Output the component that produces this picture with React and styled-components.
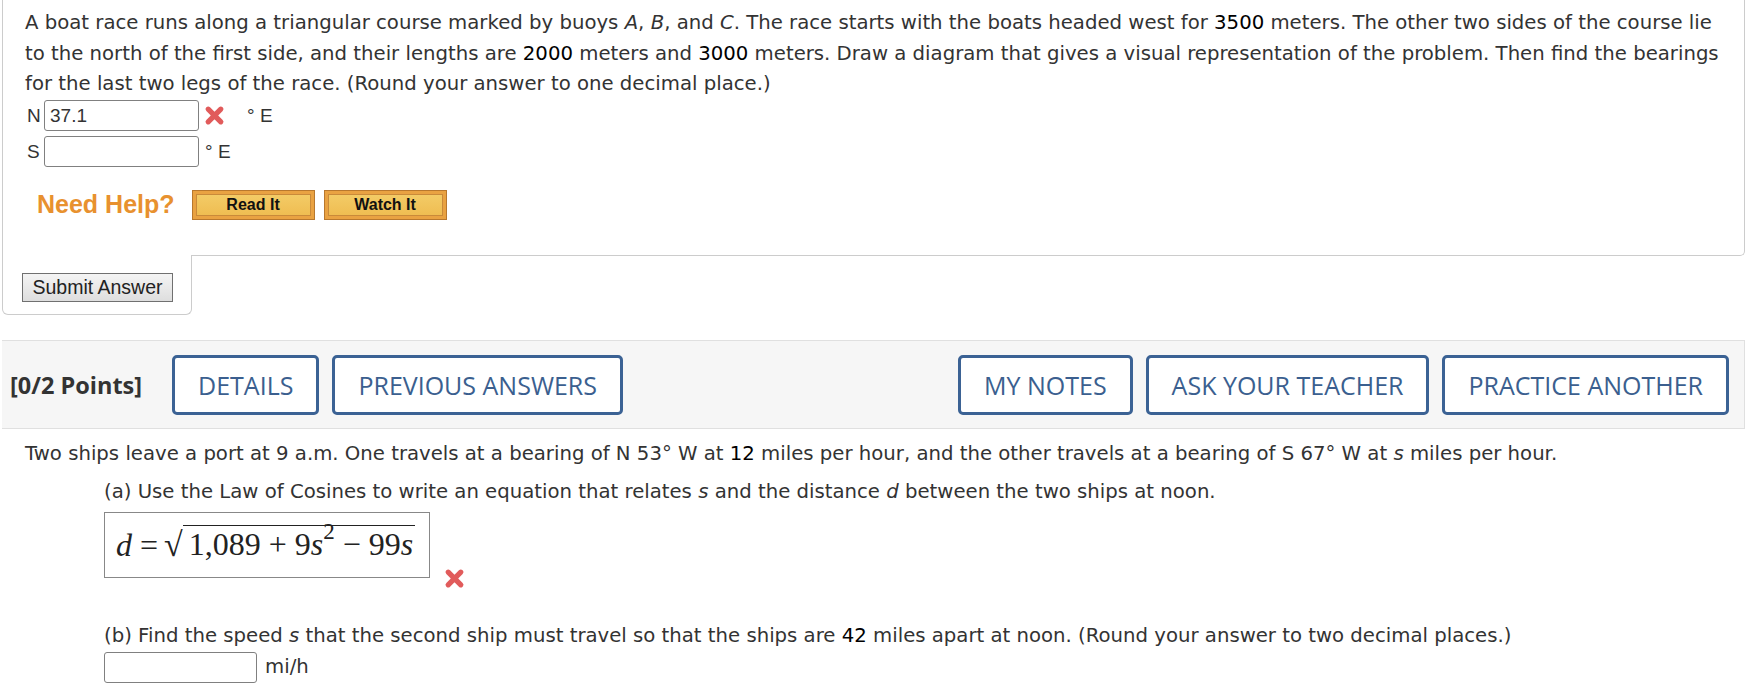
import styled, { createGlobalStyle } from 'styled-components';

const GlobalStyle = createGlobalStyle`
  body {
    margin: 0;
    background: #fff;
    font-family: "DejaVu Sans", Verdana, sans-serif;
    color: #333;
  }
`;

const Page = styled.div`
  width: 1743px;
  margin-left: 2px;
`;

const QuestionPanel = styled.div`
  border: 1px solid #ccc;
  border-top: none;
  border-radius: 0 0 5px 0;
  padding: 8px 12px 0 22px;
  height: 247px;
`;

const Prompt = styled.p`
  margin: 0 0 -2px 0;
  font-size: 19.7px;
  line-height: 30.5px;
  color: #333;
`;

const Num = styled.span`
  color: #000;
`;

const Var = styled.i``;

const AnswerRow = styled.div`
  display: flex;
  align-items: center;
  height: 36px;
  font-family: "Liberation Sans", Arial, sans-serif;
  font-size: 19px;
  color: #333;
`;

const Letter = styled.span`
  width: 17px;
  margin-left: 2px;
`;

const TextInput = styled.input`
  box-sizing: border-box;
  width: ${(p) => p.$w || 155}px;
  height: 31px;
  border: 1px solid #808080;
  border-radius: 3px;
  padding: 0 5px;
  font-family: "Liberation Sans", Arial, sans-serif;
  font-size: 19px;
  color: #333;
  background: #fff;
`;

const Unit = styled.span`
  margin-left: ${(p) => p.$gap || 6}px;
`;

const WrongMark = styled.svg`
  width: 21px;
  height: 21px;
  margin-left: ${(p) => p.$gap || 6}px;
  margin-bottom: ${(p) => p.$drop || 0}px;
  flex-shrink: 0;
`;

function Cross({ gap, drop }) {
  return (
    <WrongMark $gap={gap} $drop={drop} viewBox="0 0 20 20">
      <path d="M4 4 L16 16 M16 4 L4 16" stroke="#e15b5b" strokeWidth="5" strokeLinecap="round" />
    </WrongMark>
  );
}

const HelpRow = styled.div`
  display: flex;
  align-items: center;
  gap: 9px;
  margin-top: 20px;
  padding-left: 12px;
`;

const HelpLabel = styled.span`
  font-family: "Liberation Sans", Arial, sans-serif;
  font-weight: bold;
  font-size: 25px;
  color: #e8912f;
  margin-right: 8px;
`;

const HelpButton = styled.button`
  box-sizing: border-box;
  width: 123px;
  height: 30px;
  padding: 3px;
  border: 1px solid #b8782e;
  background: #e9a242;
  cursor: pointer;
`;

const HelpInner = styled.span`
  display: flex;
  align-items: center;
  justify-content: center;
  height: 100%;
  box-sizing: border-box;
  border: 1px solid #c98a3a;
  background: linear-gradient(#f3cb66, #efbd52);
  font-family: "Liberation Sans", Arial, sans-serif;
  font-weight: bold;
  font-size: 16px;
  color: #111;
`;

const SubmitTab = styled.div`
  width: 190px;
  height: 60px;
  box-sizing: border-box;
  margin-top: -1px;
  border: 1px solid #ccc;
  border-top: none;
  border-radius: 0 0 6px 6px;
  background: #fff;
  padding: 18px 0 0 19px;
`;

const SubmitButton = styled.button`
  width: 151px;
  height: 29px;
  border: 1px solid #707070;
  background: linear-gradient(#f4f4f4, #dedede);
  font-family: "Liberation Sans", Arial, sans-serif;
  font-size: 19.5px;
  color: #222;
  padding: 0;
`;

const ToolBand = styled.div`
  display: flex;
  align-items: center;
  margin-top: 25px;
  height: 89px;
  box-sizing: border-box;
  background: #f6f6f6;
  border: 1px solid #e0e0e0;
  border-left: none;
  padding: 0 15px 0 8px;
`;

const Points = styled.span`
  font-family: "Open Sans", sans-serif;
  font-weight: bold;
  font-size: 23.5px;
  color: #333;
  margin-right: 30px;
`;

const ButtonGroup = styled.div`
  display: flex;
  gap: 13px;
  margin-left: ${(p) => (p.$right ? 'auto' : '0')};
`;

const ToolButton = styled.button`
  box-sizing: border-box;
  height: 60px;
  padding: 0 23px;
  border: 3px solid #3b6294;
  border-radius: 5px;
  background: #fff;
  color: #3b5f8f;
  font-family: "Open Sans", sans-serif;
  font-size: 25px;
`;

const Second = styled.div`
  padding: 10px 0 0 23px;
  font-size: 19.7px;
  line-height: 30.5px;
  color: #333;
`;

const Part = styled.div`
  padding-left: 79px;
  margin-top: ${(p) => p.$top || 0}px;
`;

const MathRow = styled.div`
  display: flex;
  align-items: flex-end;
  margin-top: 5px;
`;

const MathBox = styled.div`
  box-sizing: border-box;
  width: 326px;
  height: 66px;
  border: 1px solid #888;
  display: flex;
  align-items: center;
  padding-left: 11px;
  font-family: "Liberation Serif", "Times New Roman", serif;
  font-size: 32px;
  color: #222;
`;

const MathVar = styled.i`
  font-style: italic;
`;

const Radical = styled.span`
  font-size: 34px;
  margin: 0 0 0 6px;
`;

const Radicand = styled.span`
  border-top: 1.5px solid #222;
  padding: 3px 2px 0 6px;
  margin-top: -5px;
  white-space: nowrap;
`;

const Sup = styled.sup`
  font-size: 23px;
  vertical-align: 16px;
  line-height: 0;
`;

const AnswerLine = styled.div`
  display: flex;
  align-items: center;
  gap: 8px;
`;

export default function App() {
  return (
    <Page>
      <GlobalStyle />
      <QuestionPanel>
        <Prompt>
          A boat race runs along a triangular course marked by buoys <Var>A</Var>, <Var>B</Var>, and{' '}
          <Var>C</Var>. The race starts with the boats headed west for <Num>3500</Num> meters. The other two
          sides of the course lie to the north of the first side, and their lengths are <Num>2000</Num> meters
          and <Num>3000</Num> meters. Draw a diagram that gives a visual representation of the problem. Then
          find the bearings for the last two legs of the race. (Round your answer to one decimal place.)
        </Prompt>
        <AnswerRow>
          <Letter>N</Letter>
          <TextInput defaultValue="37.1" />
          <Cross gap={5} />
          <Unit $gap={22}>° E</Unit>
        </AnswerRow>
        <AnswerRow>
          <Letter>S</Letter>
          <TextInput defaultValue="" />
          <Unit $gap={6}>° E</Unit>
        </AnswerRow>
        <HelpRow>
          <HelpLabel>Need Help?</HelpLabel>
          <HelpButton>
            <HelpInner>Read It</HelpInner>
          </HelpButton>
          <HelpButton>
            <HelpInner>Watch It</HelpInner>
          </HelpButton>
        </HelpRow>
      </QuestionPanel>
      <SubmitTab>
        <SubmitButton>Submit Answer</SubmitButton>
      </SubmitTab>
      <ToolBand>
        <Points>[0/2 Points]</Points>
        <ButtonGroup>
          <ToolButton>DETAILS</ToolButton>
          <ToolButton>PREVIOUS ANSWERS</ToolButton>
        </ButtonGroup>
        <ButtonGroup $right>
          <ToolButton>MY NOTES</ToolButton>
          <ToolButton>ASK YOUR TEACHER</ToolButton>
          <ToolButton>PRACTICE ANOTHER</ToolButton>
        </ButtonGroup>
      </ToolBand>
      <Second>
        <div>
          Two ships leave a port at 9 a.m. One travels at a bearing of N 53° W at <Num>12</Num> miles per hour,
          and the other travels at a bearing of S 67° W at <Var>s</Var> miles per hour.
        </div>
        <Part $top={7}>
          (a) Use the Law of Cosines to write an equation that relates <Var>s</Var> and the distance{' '}
          <Var>d</Var> between the two ships at noon.
          <MathRow>
            <MathBox>
              <MathVar>d</MathVar>&nbsp;=<Radical>√</Radical>
              <Radicand>
                1,089 + 9<MathVar>s</MathVar>
                <Sup>2</Sup> − 99<MathVar>s</MathVar>
              </Radicand>
            </MathBox>
            <Cross gap={14} drop={-11} />
          </MathRow>
        </Part>
        <Part $top={43}>
          (b) Find the speed <Var>s</Var> that the second ship must travel so that the ships are <Num>42</Num>{' '}
          miles apart at noon. (Round your answer to two decimal places.)
          <AnswerLine>
            <TextInput $w={153} defaultValue="" />
            <span>mi/h</span>
          </AnswerLine>
        </Part>
      </Second>
    </Page>
  );
}
